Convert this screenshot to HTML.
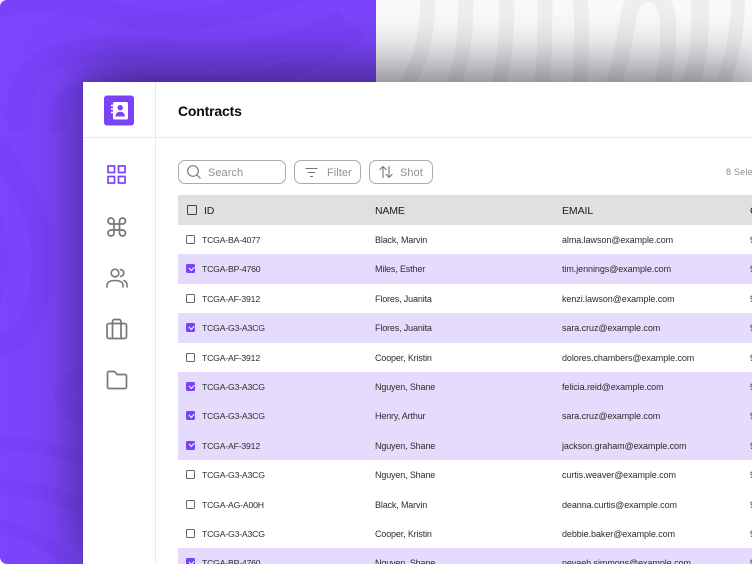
<!DOCTYPE html>
<html><head><meta charset="utf-8"><style>
*{box-sizing:border-box;margin:0;padding:0}
html,body{width:752px;height:564px;overflow:hidden;background:#fff;font-family:"Liberation Sans",sans-serif}
#wrap{position:relative;width:752px;height:564px;overflow:hidden}
#bg{position:absolute;left:0;top:0}
#panel{position:absolute;left:82px;top:82px;width:670px;height:482px;background:#fff;box-shadow:7px -6px 52px 6px rgba(25,15,40,.6);border-left:1px solid #5a2dc4}
.a{position:absolute}
.line{position:absolute;background:#e9e9ee}
.btn{position:absolute;top:160px;height:24px;border:1px solid #ababab;border-radius:7px;background:#fff}
.bt{position:absolute;top:166px;font-size:11px;line-height:14px;color:#8f8f8f;letter-spacing:.05px}
.row{position:absolute;left:178px;width:574px;height:29.4px;overflow:hidden}
.on{background:#e5dcfd}
.row span{position:absolute;top:1px;line-height:29px;font-size:9px;color:#2c2c2c;white-space:nowrap}
.row .c1{left:24px;font-size:8.7px;letter-spacing:-.2px}.c2{left:197px;letter-spacing:-.15px}.c3{left:384px;letter-spacing:-.07px}.c4{left:572px}
.cb{position:absolute;left:8px;top:10px;width:9px;height:9px;border:1px solid #666;border-radius:1.5px;background:#fff}
.on .cb{background:#7a44f6;border-color:#7a44f6}
.on .cb:after{content:"";position:absolute;left:1.6px;top:.6px;width:4px;height:2.6px;border-left:1.1px solid #fff;border-bottom:1.1px solid #fff;transform:rotate(-45deg)}
.h{font-size:10.5px!important;color:#1c1c1c!important;top:1.5px!important}
</style></head><body><div id="wrap">
<svg id="bg" width="752" height="564" viewBox="0 0 752 564">
<rect width="752" height="564" fill="#fff"/>
<rect x="0" y="0" width="376" height="564" rx="7" fill="#7c45fd"/>
<rect x="200" y="0" width="176" height="564" fill="#7c45fd"/>
<rect x="376" y="0" width="376" height="100" fill="#fafafa"/>
<g fill="none" stroke="#5f2bd0" opacity=".1">
<path d="M-10 10C60 -20 120 30 190 20S300 -10 340 -20" stroke-width="22"/>
<path d="M20 130C10 50 70 50 130 50S260 70 345 20" stroke-width="24"/>
<path d="M60 130C50 85 100 80 170 85S290 80 360 30" stroke-width="18"/>
<path d="M-10 140C30 190 50 230 40 290S10 340 -20 350" stroke-width="22"/>
<path d="M-10 210C10 260 -10 320 -20 330" stroke-width="18"/>
<path d="M-10 440C30 445 60 450 90 460" stroke-width="14"/>
<path d="M-10 485C30 490 60 495 90 510" stroke-width="16"/>
<path d="M-10 525C30 530 55 545 75 570" stroke-width="14"/>
<path d="M90 375C60 380 50 400 90 425" stroke-width="18"/>
</g>
<g fill="none" stroke="#efefef" stroke-width="15">
<path d="M428 -5C428 40 420 60 405 90"/>
<path d="M466 -5C466 40 462 60 452 90"/>
<path d="M507 -5C507 40 504 60 498 90"/>
<path d="M545 -5C545 40 545 60 541 90"/>
<path d="M580 -5C584 40 580 60 580 90"/>
<path d="M612 90C625 50 625 30 630 10C638 -15 670 -15 668 30C668 50 668 70 660 90" stroke-width="16"/>
<path d="M700 -5C700 40 700 60 688 90" stroke-width="18"/>
<path d="M738 -5C738 40 730 60 722 90" stroke-width="14"/>
</g>
</svg>
<div id="panel"></div>
<div class="line" style="left:83px;top:137px;width:669px;height:1px"></div>
<div class="line" style="left:155px;top:82px;width:1px;height:482px"></div>

<svg class="a" style="left:104px;top:95px" width="30" height="31" viewBox="0 0 30 31">
<rect x="0" y="0.5" width="30" height="30" rx="3" fill="#7a44f6"/>
<rect x="9" y="7" width="15" height="17.5" rx="1.5" fill="#fff"/>
<path d="M7 10.5h3M7 14h3M7 17.5h3" stroke="#fff" stroke-width="1.4"/>
<circle cx="16.2" cy="12.7" r="2.7" fill="#7a44f6"/>
<path d="M11.5 21.5c.3-3.6 2.2-4.8 4.7-4.8s4.4 1.2 4.7 4.8z" fill="#7a44f6"/>
</svg>

<div class="a" style="left:178px;top:102px;font-size:14px;line-height:18px;font-weight:bold;color:#0b0b0b;letter-spacing:-.18px">Contracts</div>

<svg class="a" style="left:104px;top:162px" width="26" height="26" viewBox="0 0 26 26" fill="none" stroke="#7a44f6" stroke-width="1.7">
<rect x="4" y="4" width="6.5" height="6.5"/><rect x="14.5" y="4" width="6.5" height="6.5"/><rect x="4" y="14.5" width="6.5" height="6.5"/><rect x="14.5" y="14.5" width="6.5" height="6.5"/>
</svg>
<svg class="a" style="left:104px;top:214px" width="26" height="26" viewBox="0 0 26 26" fill="none" stroke="#777" stroke-width="1.7">
<path d="M10 10h5.500v6H10zM10 10H7.200A3 3 0 1 1 10 7.200V18.800A3 3 0 1 1 7.200 16H18.300A3 3 0 1 1 15.500 18.800V7.200A3 3 0 1 1 18.300 10H10"/>
</svg>
<svg class="a" style="left:104px;top:265px" width="26" height="26" viewBox="0 0 26 26" fill="none" stroke="#777" stroke-width="1.6" stroke-linecap="round">
<circle cx="11" cy="8" r="3.800"/>
<path d="M3 22v-1.500c0-3.600 3-5 8-5s8 1.400 8 5V22"/>
<path d="M16.500 4.500c2.200.4 3.300 1.800 3.300 3.500s-1.100 3.100-3.300 3.500M20 15.500c2 .8 3 2.400 3 4.700V22"/>
</svg>
<svg class="a" style="left:104px;top:316px" width="26" height="26" viewBox="0 0 26 26" fill="none" stroke="#777" stroke-width="1.7">
<rect x="3" y="7.500" width="19.500" height="15" rx="2"/>
<path d="M8.500 22.500V5.500a2 2 0 0 1 2-2h4.500a2 2 0 0 1 2 2v17"/>
</svg>
<svg class="a" style="left:104px;top:367px" width="26" height="26" viewBox="0 0 26 26" fill="none" stroke="#777" stroke-width="1.7" stroke-linejoin="round">
<path d="M3.500 6a1.500 1.500 0 0 1 1.500-1.500h5.500l2.500 3h8a1.500 1.500 0 0 1 1.500 1.500v11a1.500 1.500 0 0 1-1.500 1.500H5A1.500 1.500 0 0 1 3.500 20z"/>
</svg>

<div class="btn" style="left:178px;width:108px"></div>
<svg class="a" style="left:186px;top:164px" width="16" height="16" viewBox="0 0 16 16" fill="none" stroke="#777" stroke-width="1.2"><circle cx="7" cy="7" r="5.300"/><path d="M11 11l3.500 3.500"/></svg>
<div class="bt" style="left:208px">Search</div>
<div class="btn" style="left:294px;width:67px"></div>
<svg class="a" style="left:304px;top:166px" width="15" height="13" viewBox="0 0 15 13" fill="none" stroke="#777" stroke-width="1.100"><path d="M1.500 2.500h12M3.800 6.500h7.400M6 10.500h3"/></svg>
<div class="bt" style="left:327px">Filter</div>
<div class="btn" style="left:369px;width:64px"></div>
<svg class="a" style="left:378px;top:165px" width="16" height="14" viewBox="0 0 16 14" fill="none" stroke="#777" stroke-width="1.100"><path d="M5 13V1.500M1.500 5L5 1.500 8.500 5M11 1v11.500M7.800 9L11 12.500 14.500 9"/></svg>
<div class="bt" style="left:400px">Shot</div>
<div class="a" style="left:726px;top:166px;font-size:9px;line-height:13px;color:#8f8f8f;white-space:nowrap;letter-spacing:.2px">8 Selected</div>

<div class="row" style="top:195px;height:29.500px;background:#e0e0e0">
<div class="cb" style="left:9px;top:10px;width:10px;height:10px;background:#e0e0e0;border-color:#444"></div>
<span class="c1 h" style="left:26px">ID</span>
<span class="c2 h">NAME</span>
<span class="c3 h">EMAIL</span>
<span class="c4 h">C</span>
</div>

<div class="row" style="top:225px"><div class="cb"></div><span class="c1">TCGA-BA-4077</span><span class="c2">Black, Marvin</span><span class="c3">alma.lawson@example.com</span><span class="c4">9</span></div>
<div class="row on" style="top:254.400px"><div class="cb"></div><span class="c1">TCGA-BP-4760</span><span class="c2">Miles, Esther</span><span class="c3">tim.jennings@example.com</span><span class="c4">9</span></div>
<div class="row" style="top:283.800px"><div class="cb"></div><span class="c1">TCGA-AF-3912</span><span class="c2">Flores, Juanita</span><span class="c3">kenzi.lawson@example.com</span><span class="c4">9</span></div>
<div class="row on" style="top:313.200px"><div class="cb"></div><span class="c1">TCGA-G3-A3CG</span><span class="c2">Flores, Juanita</span><span class="c3">sara.cruz@example.com</span><span class="c4">9</span></div>
<div class="row" style="top:342.600px"><div class="cb"></div><span class="c1">TCGA-AF-3912</span><span class="c2">Cooper, Kristin</span><span class="c3">dolores.chambers@example.com</span><span class="c4">9</span></div>
<div class="row on" style="top:372px"><div class="cb"></div><span class="c1">TCGA-G3-A3CG</span><span class="c2">Nguyen, Shane</span><span class="c3">felicia.reid@example.com</span><span class="c4">9</span></div>
<div class="row on" style="top:401.400px"><div class="cb"></div><span class="c1">TCGA-G3-A3CG</span><span class="c2">Henry, Arthur</span><span class="c3">sara.cruz@example.com</span><span class="c4">9</span></div>
<div class="row on" style="top:430.800px"><div class="cb"></div><span class="c1">TCGA-AF-3912</span><span class="c2">Nguyen, Shane</span><span class="c3">jackson.graham@example.com</span><span class="c4">9</span></div>
<div class="row" style="top:460.200px"><div class="cb"></div><span class="c1">TCGA-G3-A3CG</span><span class="c2">Nguyen, Shane</span><span class="c3">curtis.weaver@example.com</span><span class="c4">9</span></div>
<div class="row" style="top:489.600px"><div class="cb"></div><span class="c1">TCGA-AG-A00H</span><span class="c2">Black, Marvin</span><span class="c3">deanna.curtis@example.com</span><span class="c4">9</span></div>
<div class="row" style="top:519px"><div class="cb"></div><span class="c1">TCGA-G3-A3CG</span><span class="c2">Cooper, Kristin</span><span class="c3">debbie.baker@example.com</span><span class="c4">9</span></div>
<div class="row on" style="top:548.400px"><div class="cb"></div><span class="c1">TCGA-BP-4760</span><span class="c2">Nguyen, Shane</span><span class="c3">nevaeh.simmons@example.com</span><span class="c4">9</span></div>
</div></body></html>
